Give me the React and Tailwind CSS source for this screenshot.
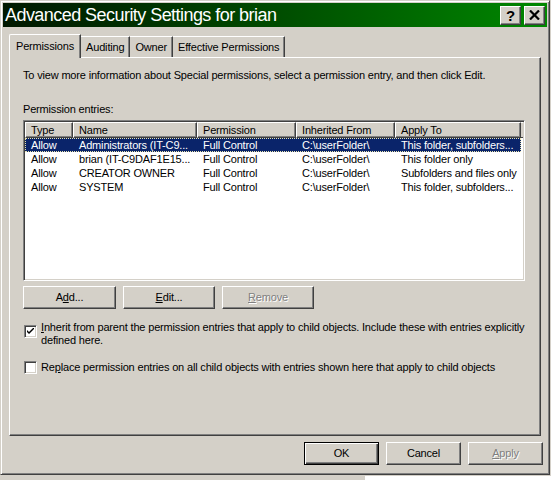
import React from 'react';

const font = { fontFamily: '"Liberation Sans", Arial, sans-serif' };

const columns = [
  { label: 'Type', w: 'w-[48px]' },
  { label: 'Name', w: 'w-[124px]' },
  { label: 'Permission', w: 'w-[99px]' },
  { label: 'Inherited From', w: 'w-[99px]' },
  { label: 'Apply To', w: 'w-[126px]' },
];

const rows = [
  ['Allow', 'Administrators (IT-C9...', 'Full Control', 'C:\\userFolder\\', 'This folder, subfolders...'],
  ['Allow', 'brian (IT-C9DAF1E15...', 'Full Control', 'C:\\userFolder\\', 'This folder only'],
  ['Allow', 'CREATOR OWNER', 'Full Control', 'C:\\userFolder\\', 'Subfolders and files only'],
  ['Allow', 'SYSTEM', 'Full Control', 'C:\\userFolder\\', 'This folder, subfolders...'],
];

function Button({ children, disabled, isDefault, className = '' }) {
  return (
    <button
      className={`h-[23px] flex items-center justify-center bg-[#d4d0c8] text-[11px] ${
        isDefault
          ? 'border border-black shadow-[inset_1px_1px_0_#fff,inset_-1px_-1px_0_#404040,inset_-2px_-2px_0_#808080]'
          : 'border border-t-white border-l-white border-r-[#404040] border-b-[#404040] shadow-[inset_-1px_-1px_0_#808080]'
      } ${disabled ? 'text-[#808080] [text-shadow:1px_1px_0_#fff]' : 'text-black'} ${className}`}
    >
      {children}
    </button>
  );
}

function Checkbox({ checked }) {
  return (
    <div className="w-[13px] h-[13px] shrink-0 bg-white border border-t-[#808080] border-l-[#808080] border-r-white border-b-white shadow-[inset_1px_1px_0_#404040,inset_-1px_-1px_0_#d4d0c8] flex items-center justify-center">
      {checked && (
        <svg width="7" height="7" viewBox="0 0 7 7">
          <path d="M0 2 L0 4 L2 6 L7 1 L7 -1 L2 4 Z" fill="#000" />
        </svg>
      )}
    </div>
  );
}

function Tab({ label, selected }) {
  if (selected) {
    return (
      <div className="relative z-10 h-[24px] -mb-px px-[6px] flex items-start pt-[3px] bg-[#d4d0c8] border-l border-t border-l-white border-t-white border-r border-r-[#404040] shadow-[inset_-1px_0_0_#808080] rounded-tl-[2px]">
        <span className="text-[11px] text-black">{label}</span>
      </div>
    );
  }
  return (
    <div className="h-[21px] px-[5px] flex items-start pt-[2px] bg-[#d4d0c8] border-t border-t-white border-r border-r-[#404040] shadow-[inset_-1px_0_0_#808080]">
      <span className="text-[11px] text-black">{label}</span>
    </div>
  );
}

export default function App() {
  return (
    <div className="w-[551px] h-[480px] bg-[#d4d0c8] overflow-hidden relative tracking-[-0.17px]" style={font}>
      <div className="w-[550px] h-[475px] bg-[#d4d0c8] border border-t-[#d4d0c8] border-l-[#d4d0c8] border-r-[#404040] border-b-[#404040] shadow-[inset_1px_1px_0_#fff,inset_-1px_-1px_0_#808080] p-[2px] flex flex-col">
        {/* title bar */}
        <div className="h-[24px] bg-linear-to-r from-[#001800] via-[#004c00] to-[#008800] flex items-center pl-[2px] pr-[2px]">
          <span className="text-white text-[18px] leading-none tracking-[-0.55px] flex-1">
            Advanced Security Settings for brian
          </span>
          <div className="flex gap-[3px]">
            <div className="w-[21px] h-[19px] bg-[#d4d0c8] border border-t-white border-l-white border-r-[#404040] border-b-[#404040] shadow-[inset_-1px_-1px_0_#808080] flex items-center justify-center text-[15px] font-bold text-black leading-none">
              ?
            </div>
            <div className="w-[21px] h-[19px] bg-[#d4d0c8] border border-t-white border-l-white border-r-[#404040] border-b-[#404040] shadow-[inset_-1px_-1px_0_#808080] flex items-center justify-center">
              <svg width="11" height="10" viewBox="0 0 11 10">
                <path d="M1 0.5 L10 9.5 M10 0.5 L1 9.5" stroke="#000" strokeWidth="2.2" />
              </svg>
            </div>
          </div>
        </div>

        {/* tabs */}
        <div className="ml-[6px] mt-[7px] flex items-end">
          <Tab label="Permissions" selected />
          <Tab label="Auditing" />
          <Tab label="Owner" />
          <Tab label="Effective Permissions" />
        </div>

        {/* tab panel */}
        <div className="ml-[6px] w-[532px] h-[379px] border border-t-white border-l-white border-r-[#404040] border-b-[#404040] shadow-[inset_-1px_-1px_0_#808080] pl-[13px] pt-[11px] text-[11px] leading-[13px] text-black">
          <div>To view more information about Special permissions, select a permission entry, and then click Edit.</div>
          <div className="mt-[21px]">Permission entries:</div>

          {/* list view */}
          <div className="mt-[4px] w-[502px] h-[161px] bg-white border border-t-[#808080] border-l-[#808080] border-r-white border-b-white shadow-[inset_1px_1px_0_#404040,inset_-1px_-1px_0_#d4d0c8] p-[1px]">
            <div className="flex h-[16px]">
              {columns.map((c) => (
                <div
                  key={c.label}
                  className={`${c.w} h-[16px] bg-[#d4d0c8] border border-t-white border-l-white border-r-[#404040] border-b-[#404040] shadow-[inset_-1px_-1px_0_#808080] pl-[5px] leading-[14px] whitespace-nowrap overflow-hidden`}
                >
                  {c.label}
                </div>
              ))}
              <div className="flex-1 bg-[#d4d0c8] border-t border-t-white border-b border-b-[#404040]" />
            </div>
            {rows.map((r, i) => (
              <div
                key={i}
                className={`flex h-[14px] leading-[14px] whitespace-nowrap ${
                  i === 0 ? 'bg-[#0a246a] text-white outline-1 outline-dotted -outline-offset-1 outline-[#e8e4b0] w-[496px]' : ''
                }`}
              >
                {r.map((cell, j) => (
                  <div key={j} className={`${columns[j].w} pl-[6px] overflow-hidden`}>
                    {cell}
                  </div>
                ))}
              </div>
            ))}
          </div>

          {/* buttons */}
          <div className="mt-[5px] flex gap-[7px]">
            <Button className="w-[93px]">
              A<span className="underline">d</span>d...
            </Button>
            <Button className="w-[92px]">
              <span className="underline">E</span>dit...
            </Button>
            <Button className="w-[92px]" disabled>
              <span className="underline">R</span>emove
            </Button>
          </div>

          {/* checkboxes */}
          <div className="mt-[12px] flex gap-[4px] whitespace-nowrap">
            <div className="pt-[4px] pl-[1px]">
              <Checkbox checked />
            </div>
            <div>
              <span className="underline">I</span>nherit from parent the permission entries that apply to child objects. Include these with entries explicitly
              <br />
              defined here.
            </div>
          </div>
          <div className="mt-[14px] flex gap-[4px] whitespace-nowrap">
            <div className="pl-[1px]">
              <Checkbox />
            </div>
            <div>
              Re<span className="underline">p</span>lace permission entries on all child objects with entries shown here that apply to child objects
            </div>
          </div>
        </div>

        {/* dialog buttons */}
        <div className="mt-[6px] flex justify-end gap-[7px] pr-[4px]">
          <Button isDefault className="w-[75px] h-[22px]">
            OK
          </Button>
          <Button className="w-[75px] h-[22px]">Cancel</Button>
          <Button disabled className="w-[75px] h-[22px]">
            <span className="underline">A</span>pply
          </Button>
        </div>
      </div>
      <div className="absolute left-[365px] top-[476px] w-[186px] h-[4px] bg-white" />
    </div>
  );
}
